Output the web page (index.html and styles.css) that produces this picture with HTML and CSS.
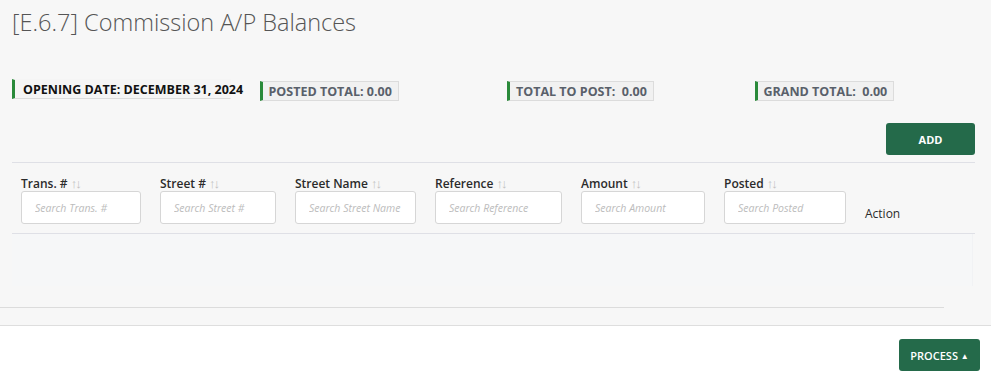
FILE: index.html
```html
<!DOCTYPE html>
<html lang="en">

<head>
    <meta charset="UTF-8">
    <meta name="viewport" content="width=device-width, initial-scale=1.0">
    <title>Commission A/P Balances</title>
    <link rel="stylesheet" href="styles.css">
</head>

<body>
    <div class="page">
        <h1 class="title">[E.6.7] Commission A/P Balances</h1>

        <div class="summary">
            <div class="badge badge-date">OPENING DATE: DECEMBER 31, 2024</div>
            <div><span class="badge">POSTED TOTAL: 0.00</span></div>
            <div><span class="badge">TOTAL TO POST:&nbsp; 0.00</span></div>
            <div><span class="badge">GRAND TOTAL:&nbsp; 0.00</span></div>
        </div>

        <div class="toolbar">
            <button class="btn">ADD</button>
        </div>

        <div class="grid">
            <div class="grid-head">
                <div class="col">
                    <label>Trans. # <span class="sort">↑↓</span></label>
                    <input type="text" placeholder="Search Trans. #">
                </div>
                <div class="col">
                    <label>Street # <span class="sort">↑↓</span></label>
                    <input type="text" placeholder="Search Street #">
                </div>
                <div class="col">
                    <label>Street Name <span class="sort">↑↓</span></label>
                    <input type="text" placeholder="Search Street Name">
                </div>
                <div class="col">
                    <label>Reference <span class="sort">↑↓</span></label>
                    <input type="text" placeholder="Search Reference">
                </div>
                <div class="col">
                    <label>Amount <span class="sort">↑↓</span></label>
                    <input type="text" placeholder="Search Amount">
                </div>
                <div class="col">
                    <label>Posted <span class="sort">↑↓</span></label>
                    <input type="text" placeholder="Search Posted">
                </div>
                <div class="col col-action">Action</div>
            </div>
            <div class="grid-body"></div>
        </div>

        <div class="pager"></div>
    </div>

    <div class="footer">
        <button class="btn">PROCESS <span class="caret">▲</span></button>
    </div>
</body>

</html>
```

FILE: styles.css
```css
body {
    margin: 0;
    background-color: #fff;
    font-family: 'Open Sans', 'Noto Sans', sans-serif;
    color: #333;
}

.page {
    background-color: #f7f7f7;
    height: 326px;
    padding: 0 16px 0 12px;
    border-bottom: 1px solid #dedede;
    box-sizing: border-box;
}

.title {
    margin: 0;
    padding-top: 6px;
    font-size: 23.5px;
    font-weight: 300;
    line-height: 32px;
    color: #555;
}

.summary {
    display: grid;
    grid-template-columns: repeat(4, 247.5px);
    margin-top: 41px;
    height: 20px;
}

.badge {
    display: inline-block;
    height: 20px;
    line-height: 19px;
    padding: 0 6px 0 6px;
    box-sizing: border-box;
    border: 1px solid #dcdcdc;
    border-left: 3px solid #2a8a3a;
    background-color: #f1f1f1;
    color: #59606a;
    font-size: 12.5px;
    font-weight: 700;
    white-space: nowrap;
}

.badge-date {
    width: 219px;
    color: #111;
    background-color: #f5f5f5;
    border-top-color: #f5f5f5;
    border-right-color: #f5f5f5;
    padding-left: 8px;
}

.toolbar {
    display: flex;
    justify-content: flex-end;
    margin-top: 24px;
}

.btn {
    height: 32px;
    padding: 0 18px;
    border: none;
    border-radius: 3px;
    background-color: #246a4a;
    color: #fff;
    font-family: 'Open Sans', sans-serif;
    font-size: 11px;
    font-weight: 700;
    cursor: pointer;
}

.toolbar .btn {
    width: 89px;
}

.grid {
    margin-top: 7px;
    border-top: 1px solid #dfe0e6;
}

.grid-head {
    display: grid;
    grid-template-columns: 120px 116px 121px 127px 124px 122px 1fr;
    column-gap: 19px;
    padding: 9px 9px 9px 9px;
    border-bottom: 1px solid #dfe0e6;
}

.col label {
    display: block;
    height: 19px;
    box-sizing: border-box;
    padding-top: 2px;
    font-size: 12px;
    font-weight: 600;
    line-height: 18px;
    color: #2b2b2b;
    white-space: nowrap;
}

.sort {
    color: #c2c2c2;
    font-weight: 400;
    font-size: 13px;
    letter-spacing: -2px;
}

.col input {
    display: block;
    width: 100%;
    height: 33px;
    box-sizing: border-box;
    padding: 0 13px;
    border: 1px solid #d6d6d6;
    border-radius: 3px;
    background-color: #fff;
    font-family: 'Open Sans', sans-serif;
    font-size: 10.5px;
    font-style: italic;
    outline: none;
}

.col input::placeholder {
    color: #bcbcbc;
}

.col-action {
    align-self: end;
    font-size: 12px;
    line-height: 18px;
    padding-bottom: 1px;
    color: #2b2b2b;
}

.grid-body {
    height: 52px;
    margin-right: 2px;
    background-color: #f6f7f8;
    border-right: 1px solid #f1f2f4;
}

.pager {
    margin: 21px 31px 0 -12px;
    border-bottom: 1px solid #dcdcdc;
}

.footer {
    display: flex;
    justify-content: flex-end;
    padding: 13px 11px 0 0;
}

.footer .btn {
    width: 81px;
    padding: 0;
    font-weight: 600;
}

.caret {
    font-size: 8px;
    vertical-align: 1px;
}
```
